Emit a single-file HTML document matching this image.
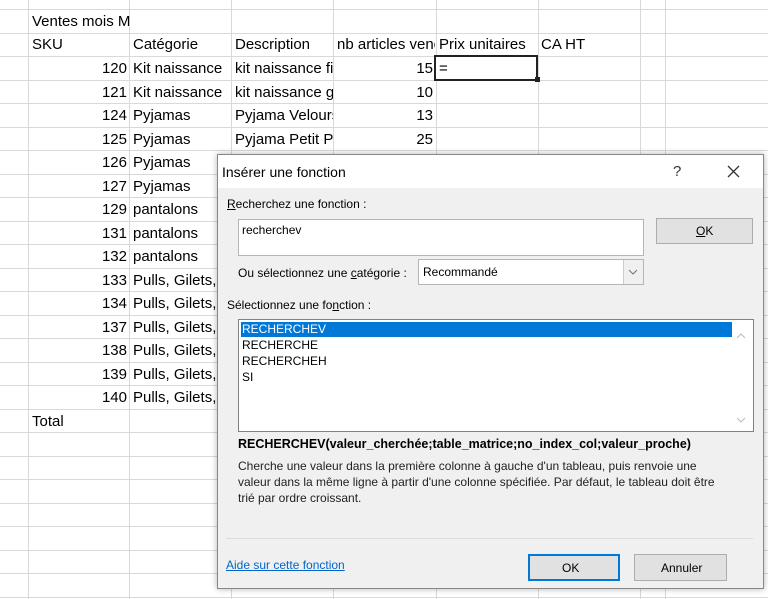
<!DOCTYPE html>
<html><head><meta charset="utf-8"><style>
*{margin:0;padding:0;box-sizing:border-box}
body{width:768px;height:599px;overflow:hidden;background:#fff;font-family:"Liberation Sans",sans-serif;position:relative}
.vl{position:absolute;top:0;height:599px;width:1px;background:#d9d9d9}
.hl{position:absolute;left:0;width:768px;height:1px;background:#d9d9d9}
.c{position:absolute;font-size:15px;color:#000;white-space:nowrap;overflow:hidden;height:23px;line-height:23px}
.r{text-align:right}
.d{position:absolute;font-size:12px;color:#000;white-space:nowrap}
</style></head><body>
<div class="vl" style="left:28px"></div><div class="vl" style="left:129px"></div><div class="vl" style="left:231px"></div><div class="vl" style="left:333px"></div><div class="vl" style="left:436px"></div><div class="vl" style="left:538px"></div><div class="vl" style="left:640px"></div><div class="vl" style="left:665px"></div>
<div id="rows"></div>
<script>
let h='';for(let i=0;i<26;i++){h+='<div class="hl" style="top:'+(9+i*23.5)+'px"></div>'}
document.getElementById('rows').innerHTML=h;
</script>
<div class="c" style="left:32px;top:10px">Ventes mois M</div>
<div class="c" style="left:32px;top:33px">SKU</div>
<div class="c" style="left:133px;top:33px">Catégorie</div>
<div class="c" style="left:235px;top:33px">Description</div>
<div class="c" style="left:337px;top:33px;width:98px">nb articles vendus</div>
<div class="c" style="left:439px;top:33px">Prix unitaires</div>
<div class="c" style="left:541px;top:33px">CA HT</div>
<div id="data"></div>
<script>
const d=[[120,'Kit naissance','kit naissance fille',15],[121,'Kit naissance','kit naissance garçon',10],[124,'Pyjamas','Pyjama Velours',13],[125,'Pyjamas','Pyjama Petit Prince',25],[126,'Pyjamas'],[127,'Pyjamas'],[129,'pantalons'],[131,'pantalons'],[132,'pantalons'],[133,'Pulls, Gilets, Sweats'],[134,'Pulls, Gilets, Sweats'],[137,'Pulls, Gilets, Sweats'],[138,'Pulls, Gilets, Sweats'],[139,'Pulls, Gilets, Sweats'],[140,'Pulls, Gilets, Sweats']];
let s='';d.forEach((r,i)=>{const t=57+i*23.5;
s+='<div class="c r" style="left:29px;width:98px;top:'+t+'px">'+r[0]+'</div>';
s+='<div class="c" style="left:133px;width:100px;top:'+t+'px">'+r[1]+'</div>';
if(r[2]){s+='<div class="c" style="left:235px;width:98px;top:'+t+'px">'+r[2]+'</div>';
s+='<div class="c r" style="left:334px;width:99px;top:'+t+'px">'+r[3]+'</div>';}});
document.getElementById('data').innerHTML=s;
</script>
<div class="c" style="left:32px;top:410px">Total</div>
<div style="position:absolute;left:434px;top:55px;width:104px;height:26px;border:2px solid #222;background:#fff"></div>
<div class="c" style="left:439px;top:57px">=</div>
<div style="position:absolute;left:535px;top:77px;width:5px;height:5px;background:#222"></div>

<div style="position:absolute;left:217px;top:154px;width:547px;height:435px;background:#f0f0f0;border:1px solid #888;box-shadow:0 0 6px rgba(0,0,0,.3)">
<div style="position:absolute;left:0;top:0;width:545px;height:33px;background:#fff"></div>
<div class="d" style="left:4px;top:9px;font-size:14px">Insérer une fonction</div>
<div class="d" style="left:455px;top:8px;font-size:15px;color:#333">?</div>
<svg style="position:absolute;left:509px;top:10px" width="13" height="13"><path d="M1 1L12 12M12 1L1 12" stroke="#333" stroke-width="1.3"/></svg>
<div class="d" style="left:9px;top:42px"><u>R</u>echerchez une fonction :</div>
<div style="position:absolute;left:20px;top:64px;width:406px;height:37px;background:#fff;border:1px solid #b5b5b5"></div>
<div class="d" style="left:24px;top:68px">recherchev</div>
<div style="position:absolute;left:438px;top:63px;width:97px;height:26px;background:#e1e1e1;border:1px solid #adadad"></div>
<div class="d" style="left:478px;top:69px"><u>O</u>K</div>
<div class="d" style="left:20px;top:111px">Ou sélectionnez une <u>c</u>atégorie :</div>
<div style="position:absolute;left:200px;top:104px;width:226px;height:26px;background:#fff;border:1px solid #b5b5b5"></div>
<div class="d" style="left:205px;top:110px">Recommandé</div>
<div style="position:absolute;left:405px;top:105px;width:20px;height:24px;background:#f0f0f0;border-left:1px solid #ccc"></div>
<svg style="position:absolute;left:410px;top:114px" width="10" height="6"><path d="M1 1L5 5L9 1" stroke="#777" fill="none"/></svg>
<div class="d" style="left:9px;top:143px">Sélectionnez une fo<u>n</u>ction :</div>
<div style="position:absolute;left:20px;top:164px;width:516px;height:113px;background:#fff;border:1px solid #828282"></div>
<div style="position:absolute;left:23px;top:167px;width:491px;height:15px;background:#0078d7;outline:1px dotted #fff"></div>
<div class="d" style="left:24px;top:167px;color:#fff">RECHERCHEV</div>
<div class="d" style="left:24px;top:183px">RECHERCHE</div>
<div class="d" style="left:24px;top:199px">RECHERCHEH</div>
<div class="d" style="left:24px;top:215px">SI</div>
<svg style="position:absolute;left:518px;top:178px" width="10" height="6"><path d="M1 5L5 1L9 5" stroke="#bbb" fill="none"/></svg>
<svg style="position:absolute;left:518px;top:262px" width="10" height="6"><path d="M1 1L5 5L9 1" stroke="#bbb" fill="none"/></svg>
<div class="d" style="left:20px;top:282px;font-weight:bold;font-size:12.5px">RECHERCHEV(valeur_cherchée;table_matrice;no_index_col;valeur_proche)</div>
<div class="d" style="left:20px;top:303px;line-height:16px;font-size:12px;color:#222">Cherche une valeur dans la première colonne à gauche d'un tableau, puis renvoie une<br>valeur dans la même ligne à partir d'une colonne spécifiée. Par défaut, le tableau doit être<br>trié par ordre croissant.</div>
<div style="position:absolute;left:8px;top:383px;width:527px;height:1px;background:#dcdcdc"></div>
<div class="d" style="left:8px;top:403px;color:#0066cc;text-decoration:underline">Aide sur cette fonction</div>
<div style="position:absolute;left:310px;top:399px;width:92px;height:27px;background:#e1e1e1;border:2px solid #0078d7"></div>
<div class="d" style="left:344px;top:406px">OK</div>
<div style="position:absolute;left:416px;top:399px;width:93px;height:27px;background:#e1e1e1;border:1px solid #adadad"></div>
<div class="d" style="left:443px;top:406px">Annuler</div>
</div>
</body></html>
